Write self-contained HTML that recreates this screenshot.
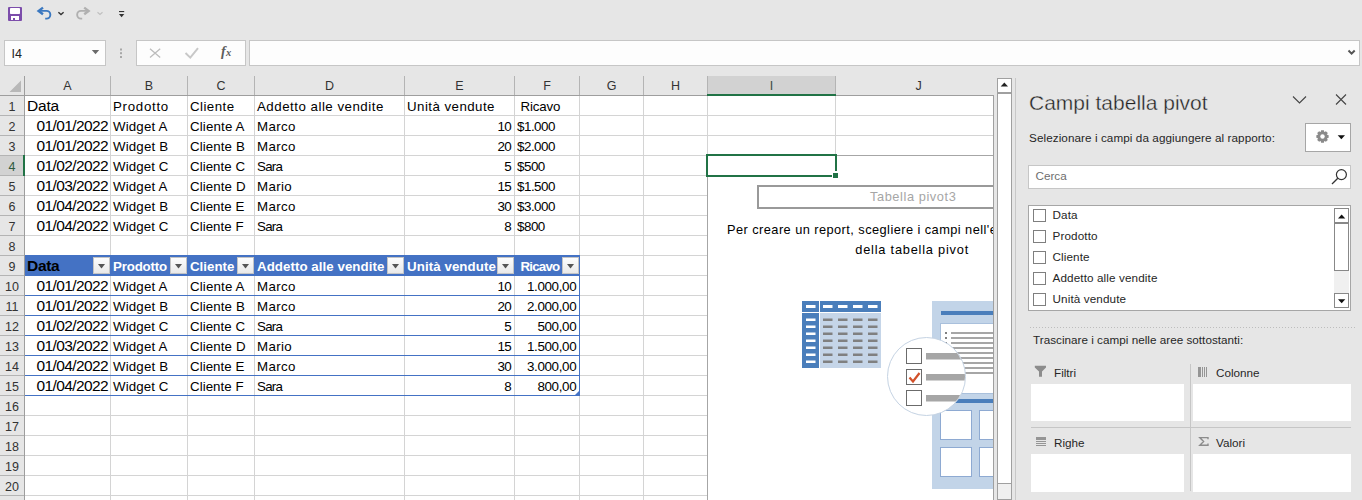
<!DOCTYPE html><html><head><meta charset="utf-8"><style>
html,body{margin:0;padding:0;}
body{width:1362px;height:500px;position:relative;overflow:hidden;background:#e6e6e6;font-family:"Liberation Sans",sans-serif;}
.t{position:absolute;white-space:nowrap;line-height:1;}
.r{position:absolute;}
svg{position:absolute;overflow:visible;}
#sheet{position:absolute;left:0;top:0;width:1362px;height:500px;clip-path:inset(0 368px 0 0);}
</style></head><body>
<svg style="left:0;top:0" width="140" height="30">
<rect x="8" y="7" width="14" height="14" rx="1" fill="#7c4dab"/>
<rect x="10" y="8" width="10" height="6" rx="0.8" fill="#fff"/>
<rect x="11" y="16" width="8" height="4" fill="#fff"/>
<rect x="13" y="18" width="2" height="2" fill="#7c4dab"/>
<path d="M43 7.6 L38.6 10.9 L43 14.2" fill="none" stroke="#3b78c0" stroke-width="2.4" stroke-linejoin="miter"/>
<path d="M39.5 10.9 H46.5 A3.85 3.85 0 0 1 46.5 18.6 H45.2" fill="none" stroke="#3b78c0" stroke-width="1.9"/>
<path d="M58.4 12.3 L61 14.5 L63.6 12.3" fill="none" stroke="#333" stroke-width="1.4"/>
<path d="M84.2 7.6 L88.6 10.9 L84.2 14.2" fill="none" stroke="#b0b0b0" stroke-width="2.4" stroke-linejoin="miter"/>
<path d="M87.7 10.9 H81 A3.85 3.85 0 0 0 81 18.6 H82.2" fill="none" stroke="#b0b0b0" stroke-width="1.9"/>
<path d="M97.5 12.3 L100 14.4 L102.5 12.3" fill="none" stroke="#c0c0c0" stroke-width="1.2"/>
<rect x="119" y="11" width="5.2" height="1.1" fill="#333"/>
<path d="M118.9 14.1 H124.3 L121.6 17.3 Z" fill="#333"/>
</svg>
<div class="r" style="left:4px;top:40px;width:102px;height:26px;background:#fdfdfd;border:1px solid #c6c6c6;box-sizing:border-box;"></div>
<div class="t" style="top:48.42px;font-size:12.5px;color:#222;left:11.5px;">I4</div>
<svg style="left:0;top:0" width="260" height="70"><path d="M91.8 50 H99.2 L95.5 54.2 Z" fill="#6a6a6a"/><rect x="120" y="48.5" width="2" height="2" fill="#a8a8a8"/><rect x="120" y="52.2" width="2" height="2" fill="#a8a8a8"/><rect x="120" y="56" width="2" height="2" fill="#a8a8a8"/></svg>
<div class="r" style="left:136px;top:40px;width:110px;height:26px;background:#fdfdfd;border:1px solid #c6c6c6;box-sizing:border-box;"></div>
<svg style="left:0;top:0" width="260" height="70"><path d="M150 48.8 L160.2 57.6 M160.2 48.8 L150 57.6" stroke="#bdbdbd" stroke-width="1.3" fill="none"/><path d="M185.5 53 L190.3 57.6 L198 48.2" stroke="#c8c8c8" stroke-width="2" fill="none"/></svg>
<div class="t" style="top:44.95px;font-size:14px;color:#5c5c5c;font-weight:bold;font-family:'Liberation Serif',serif;left:221px;"><i>f</i><span style="font-size:10.5px;margin-left:0.3px"><i>x</i></span></div>
<div class="r" style="left:249px;top:40px;width:1111px;height:26px;background:#fdfdfd;border:1px solid #c6c6c6;box-sizing:border-box;"></div>
<svg style="left:0;top:0" width="1362" height="70"><path d="M1348.5 50.5 L1351.6 53.6 L1354.7 50.5" stroke="#555" stroke-width="2" fill="none"/></svg>
<div id="sheet">
<div class="r" style="left:0px;top:76px;width:994px;height:20px;background:#e6e6e6;"></div>
<div class="r" style="left:708px;top:76px;width:127px;height:19px;background:#d2d2d2;"></div>
<div class="r" style="left:110px;top:76px;width:1px;height:19px;background:#b4b4b4;"></div>
<div class="r" style="left:187px;top:76px;width:1px;height:19px;background:#b4b4b4;"></div>
<div class="r" style="left:254px;top:76px;width:1px;height:19px;background:#b4b4b4;"></div>
<div class="r" style="left:404px;top:76px;width:1px;height:19px;background:#b4b4b4;"></div>
<div class="r" style="left:514px;top:76px;width:1px;height:19px;background:#b4b4b4;"></div>
<div class="r" style="left:579px;top:76px;width:1px;height:19px;background:#b4b4b4;"></div>
<div class="r" style="left:643px;top:76px;width:1px;height:19px;background:#b4b4b4;"></div>
<div class="r" style="left:707px;top:76px;width:1px;height:19px;background:#b4b4b4;"></div>
<div class="r" style="left:835px;top:76px;width:1px;height:19px;background:#b4b4b4;"></div>
<div class="r" style="left:0px;top:95px;width:994px;height:1px;background:#9e9e9e;"></div>
<div class="r" style="left:707px;top:94px;width:129px;height:2px;background:#217346;"></div>
<svg style="left:0;top:0" width="30" height="100"><path d="M21 80.5 V92 H9.5 Z" fill="#b8b8b8"/></svg>
<div class="t" style="top:80.22px;font-size:12.5px;color:#333;left:-132.5px;width:400px;text-align:center;">A</div>
<div class="t" style="top:80.22px;font-size:12.5px;color:#333;left:-51.0px;width:400px;text-align:center;">B</div>
<div class="t" style="top:80.22px;font-size:12.5px;color:#333;left:21.0px;width:400px;text-align:center;">C</div>
<div class="t" style="top:80.22px;font-size:12.5px;color:#333;left:129.5px;width:400px;text-align:center;">D</div>
<div class="t" style="top:80.22px;font-size:12.5px;color:#333;left:259.5px;width:400px;text-align:center;">E</div>
<div class="t" style="top:80.22px;font-size:12.5px;color:#333;left:347.0px;width:400px;text-align:center;">F</div>
<div class="t" style="top:80.22px;font-size:12.5px;color:#333;left:411.5px;width:400px;text-align:center;">G</div>
<div class="t" style="top:80.22px;font-size:12.5px;color:#333;left:475.5px;width:400px;text-align:center;">H</div>
<div class="t" style="top:80.22px;font-size:12.5px;color:#3a4a40;left:571.5px;width:400px;text-align:center;">I</div>
<div class="t" style="top:80.22px;font-size:12.5px;color:#333;left:718.5px;width:400px;text-align:center;">J</div>
<div class="r" style="left:0px;top:96px;width:24px;height:404px;background:#e6e6e6;"></div>
<div class="r" style="left:24px;top:76px;width:1px;height:424px;background:#9e9e9e;"></div>
<div class="r" style="left:0px;top:156px;width:24px;height:19px;background:#d2d2d2;"></div>
<div class="r" style="left:0px;top:115px;width:24px;height:1px;background:#b4b4b4;"></div>
<div class="r" style="left:0px;top:135px;width:24px;height:1px;background:#b4b4b4;"></div>
<div class="r" style="left:0px;top:155px;width:24px;height:1px;background:#b4b4b4;"></div>
<div class="r" style="left:0px;top:175px;width:24px;height:1px;background:#b4b4b4;"></div>
<div class="r" style="left:0px;top:195px;width:24px;height:1px;background:#b4b4b4;"></div>
<div class="r" style="left:0px;top:215px;width:24px;height:1px;background:#b4b4b4;"></div>
<div class="r" style="left:0px;top:235px;width:24px;height:1px;background:#b4b4b4;"></div>
<div class="r" style="left:0px;top:255px;width:24px;height:1px;background:#b4b4b4;"></div>
<div class="r" style="left:0px;top:275px;width:24px;height:1px;background:#b4b4b4;"></div>
<div class="r" style="left:0px;top:295px;width:24px;height:1px;background:#b4b4b4;"></div>
<div class="r" style="left:0px;top:315px;width:24px;height:1px;background:#b4b4b4;"></div>
<div class="r" style="left:0px;top:335px;width:24px;height:1px;background:#b4b4b4;"></div>
<div class="r" style="left:0px;top:355px;width:24px;height:1px;background:#b4b4b4;"></div>
<div class="r" style="left:0px;top:375px;width:24px;height:1px;background:#b4b4b4;"></div>
<div class="r" style="left:0px;top:395px;width:24px;height:1px;background:#b4b4b4;"></div>
<div class="r" style="left:0px;top:415px;width:24px;height:1px;background:#b4b4b4;"></div>
<div class="r" style="left:0px;top:435px;width:24px;height:1px;background:#b4b4b4;"></div>
<div class="r" style="left:0px;top:455px;width:24px;height:1px;background:#b4b4b4;"></div>
<div class="r" style="left:0px;top:475px;width:24px;height:1px;background:#b4b4b4;"></div>
<div class="r" style="left:0px;top:495px;width:24px;height:1px;background:#b4b4b4;"></div>
<div class="r" style="left:0px;top:515px;width:24px;height:1px;background:#b4b4b4;"></div>
<div class="t" style="top:100.72px;font-size:12.5px;color:#333;left:-188px;width:400px;text-align:center;">1</div>
<div class="t" style="top:120.72px;font-size:12.5px;color:#333;left:-188px;width:400px;text-align:center;">2</div>
<div class="t" style="top:140.72px;font-size:12.5px;color:#333;left:-188px;width:400px;text-align:center;">3</div>
<div class="t" style="top:160.72px;font-size:12.5px;color:#2f5a40;left:-188px;width:400px;text-align:center;">4</div>
<div class="t" style="top:180.72px;font-size:12.5px;color:#333;left:-188px;width:400px;text-align:center;">5</div>
<div class="t" style="top:200.72px;font-size:12.5px;color:#333;left:-188px;width:400px;text-align:center;">6</div>
<div class="t" style="top:220.72px;font-size:12.5px;color:#333;left:-188px;width:400px;text-align:center;">7</div>
<div class="t" style="top:240.72px;font-size:12.5px;color:#333;left:-188px;width:400px;text-align:center;">8</div>
<div class="t" style="top:260.72px;font-size:12.5px;color:#333;left:-188px;width:400px;text-align:center;">9</div>
<div class="t" style="top:280.72px;font-size:12.5px;color:#333;left:-188px;width:400px;text-align:center;">10</div>
<div class="t" style="top:300.72px;font-size:12.5px;color:#333;left:-188px;width:400px;text-align:center;">11</div>
<div class="t" style="top:320.72px;font-size:12.5px;color:#333;left:-188px;width:400px;text-align:center;">12</div>
<div class="t" style="top:340.72px;font-size:12.5px;color:#333;left:-188px;width:400px;text-align:center;">13</div>
<div class="t" style="top:360.72px;font-size:12.5px;color:#333;left:-188px;width:400px;text-align:center;">14</div>
<div class="t" style="top:380.72px;font-size:12.5px;color:#333;left:-188px;width:400px;text-align:center;">15</div>
<div class="t" style="top:400.72px;font-size:12.5px;color:#333;left:-188px;width:400px;text-align:center;">16</div>
<div class="t" style="top:420.72px;font-size:12.5px;color:#333;left:-188px;width:400px;text-align:center;">17</div>
<div class="t" style="top:440.72px;font-size:12.5px;color:#333;left:-188px;width:400px;text-align:center;">18</div>
<div class="t" style="top:460.72px;font-size:12.5px;color:#333;left:-188px;width:400px;text-align:center;">19</div>
<div class="t" style="top:480.72px;font-size:12.5px;color:#333;left:-188px;width:400px;text-align:center;">20</div>
<div class="t" style="top:500.72px;font-size:12.5px;color:#333;left:-188px;width:400px;text-align:center;">21</div>
<div class="r" style="left:23px;top:155px;width:2px;height:21px;background:#217346;"></div>
<div class="r" style="left:25px;top:96px;width:968px;height:404px;background:#fff;"></div>
<div class="r" style="left:25px;top:115px;width:968px;height:1px;background:#d4d4d4;"></div>
<div class="r" style="left:25px;top:135px;width:968px;height:1px;background:#d4d4d4;"></div>
<div class="r" style="left:25px;top:155px;width:968px;height:1px;background:#d4d4d4;"></div>
<div class="r" style="left:25px;top:175px;width:968px;height:1px;background:#d4d4d4;"></div>
<div class="r" style="left:25px;top:195px;width:968px;height:1px;background:#d4d4d4;"></div>
<div class="r" style="left:25px;top:215px;width:968px;height:1px;background:#d4d4d4;"></div>
<div class="r" style="left:25px;top:235px;width:968px;height:1px;background:#d4d4d4;"></div>
<div class="r" style="left:25px;top:255px;width:968px;height:1px;background:#d4d4d4;"></div>
<div class="r" style="left:25px;top:275px;width:968px;height:1px;background:#d4d4d4;"></div>
<div class="r" style="left:25px;top:295px;width:968px;height:1px;background:#d4d4d4;"></div>
<div class="r" style="left:25px;top:315px;width:968px;height:1px;background:#d4d4d4;"></div>
<div class="r" style="left:25px;top:335px;width:968px;height:1px;background:#d4d4d4;"></div>
<div class="r" style="left:25px;top:355px;width:968px;height:1px;background:#d4d4d4;"></div>
<div class="r" style="left:25px;top:375px;width:968px;height:1px;background:#d4d4d4;"></div>
<div class="r" style="left:25px;top:395px;width:968px;height:1px;background:#d4d4d4;"></div>
<div class="r" style="left:25px;top:415px;width:968px;height:1px;background:#d4d4d4;"></div>
<div class="r" style="left:25px;top:435px;width:968px;height:1px;background:#d4d4d4;"></div>
<div class="r" style="left:25px;top:455px;width:968px;height:1px;background:#d4d4d4;"></div>
<div class="r" style="left:25px;top:475px;width:968px;height:1px;background:#d4d4d4;"></div>
<div class="r" style="left:25px;top:495px;width:968px;height:1px;background:#d4d4d4;"></div>
<div class="r" style="left:25px;top:515px;width:968px;height:1px;background:#d4d4d4;"></div>
<div class="r" style="left:110px;top:96px;width:1px;height:404px;background:#d4d4d4;"></div>
<div class="r" style="left:187px;top:96px;width:1px;height:404px;background:#d4d4d4;"></div>
<div class="r" style="left:254px;top:96px;width:1px;height:404px;background:#d4d4d4;"></div>
<div class="r" style="left:404px;top:96px;width:1px;height:404px;background:#d4d4d4;"></div>
<div class="r" style="left:514px;top:96px;width:1px;height:404px;background:#d4d4d4;"></div>
<div class="r" style="left:579px;top:96px;width:1px;height:404px;background:#d4d4d4;"></div>
<div class="r" style="left:643px;top:96px;width:1px;height:404px;background:#d4d4d4;"></div>
<div class="r" style="left:707px;top:96px;width:1px;height:404px;background:#d4d4d4;"></div>
<div class="r" style="left:835px;top:96px;width:1px;height:404px;background:#d4d4d4;"></div>
<div class="r" style="left:708px;top:156px;width:285px;height:344px;background:#fff;"></div>
<div class="r" style="left:707px;top:155px;width:1px;height:345px;background:#a6a6a6;"></div>
<div class="r" style="left:707px;top:155px;width:286px;height:1px;background:#a6a6a6;"></div>
<div class="r" style="left:25px;top:255px;width:555px;height:21px;background:#4472c4;"></div>
<div class="r" style="left:25px;top:295px;width:555px;height:1px;background:#4472c4;"></div>
<div class="r" style="left:25px;top:315px;width:555px;height:1px;background:#4472c4;"></div>
<div class="r" style="left:25px;top:335px;width:555px;height:1px;background:#4472c4;"></div>
<div class="r" style="left:25px;top:355px;width:555px;height:1px;background:#4472c4;"></div>
<div class="r" style="left:25px;top:375px;width:555px;height:1px;background:#4472c4;"></div>
<div class="r" style="left:25px;top:395px;width:555px;height:1px;background:#4472c4;"></div>
<div class="r" style="left:579px;top:255px;width:1px;height:141px;background:#4472c4;"></div>
<svg style="left:0;top:0" width="600" height="400"><path d="M579.5 390.5 V395.5 H574.5 Z" fill="#4472c4"/></svg>
<div class="r" style="left:93px;top:257px;width:17px;height:17px;background:linear-gradient(#fdfdfd,#e9e9e9);border:1px solid #c4c4c4;box-sizing:border-box;"></div>
<svg style="left:0;top:0" width="600" height="300"><path d="M98 264 H105 L101.5 268.5 Z" fill="#555"/></svg>
<div class="r" style="left:170px;top:257px;width:17px;height:17px;background:linear-gradient(#fdfdfd,#e9e9e9);border:1px solid #c4c4c4;box-sizing:border-box;"></div>
<svg style="left:0;top:0" width="600" height="300"><path d="M175 264 H182 L178.5 268.5 Z" fill="#555"/></svg>
<div class="r" style="left:237px;top:257px;width:17px;height:17px;background:linear-gradient(#fdfdfd,#e9e9e9);border:1px solid #c4c4c4;box-sizing:border-box;"></div>
<svg style="left:0;top:0" width="600" height="300"><path d="M242 264 H249 L245.5 268.5 Z" fill="#555"/></svg>
<div class="r" style="left:387px;top:257px;width:17px;height:17px;background:linear-gradient(#fdfdfd,#e9e9e9);border:1px solid #c4c4c4;box-sizing:border-box;"></div>
<svg style="left:0;top:0" width="600" height="300"><path d="M392 264 H399 L395.5 268.5 Z" fill="#555"/></svg>
<div class="r" style="left:497px;top:257px;width:17px;height:17px;background:linear-gradient(#fdfdfd,#e9e9e9);border:1px solid #c4c4c4;box-sizing:border-box;"></div>
<svg style="left:0;top:0" width="600" height="300"><path d="M502 264 H509 L505.5 268.5 Z" fill="#555"/></svg>
<div class="r" style="left:562px;top:257px;width:17px;height:17px;background:linear-gradient(#fdfdfd,#e9e9e9);border:1px solid #c4c4c4;box-sizing:border-box;"></div>
<svg style="left:0;top:0" width="600" height="300"><path d="M567 264 H574 L570.5 268.5 Z" fill="#555"/></svg>
<div class="t" style="top:97.88px;font-size:15.5px;color:#000;letter-spacing:-0.2px;left:27px;">Data</div>
<div class="t" style="top:99.74px;font-size:13.3px;color:#000;letter-spacing:0.7px;left:113px;">Prodotto</div>
<div class="t" style="top:99.74px;font-size:13.3px;color:#000;letter-spacing:0.45px;left:190px;">Cliente</div>
<div class="t" style="top:99.74px;font-size:13.3px;color:#000;letter-spacing:0.5px;left:257px;">Addetto alle vendite</div>
<div class="t" style="top:99.74px;font-size:13.3px;color:#000;letter-spacing:0.45px;left:407px;">Unit&agrave; vendute</div>
<div class="t" style="top:99.74px;font-size:13.3px;color:#000;letter-spacing:-0.17px;left:520.5px;">Ricavo</div>
<div class="t" style="top:117.88px;font-size:15.5px;color:#000;letter-spacing:-0.62px;right:1254.02px;">01/01/2022</div>
<div class="t" style="top:119.74px;font-size:13.3px;color:#000;letter-spacing:0.15px;left:113px;">Widget A</div>
<div class="t" style="top:119.74px;font-size:13.3px;color:#000;letter-spacing:0.15px;left:190px;">Cliente A</div>
<div class="t" style="top:119.74px;font-size:13.3px;color:#000;letter-spacing:0.36px;left:257px;">Marco</div>
<div class="t" style="top:119.66px;font-size:13.4px;color:#000;letter-spacing:-0.5px;right:850.70px;">10</div>
<div class="t" style="top:119.66px;font-size:13.4px;color:#000;letter-spacing:-0.5px;left:517px;">$1.000</div>
<div class="t" style="top:137.88px;font-size:15.5px;color:#000;letter-spacing:-0.62px;right:1254.02px;">01/01/2022</div>
<div class="t" style="top:139.74px;font-size:13.3px;color:#000;letter-spacing:0.15px;left:113px;">Widget B</div>
<div class="t" style="top:139.74px;font-size:13.3px;color:#000;letter-spacing:0.1px;left:190px;">Cliente B</div>
<div class="t" style="top:139.74px;font-size:13.3px;color:#000;letter-spacing:0.36px;left:257px;">Marco</div>
<div class="t" style="top:139.66px;font-size:13.4px;color:#000;letter-spacing:-0.5px;right:850.70px;">20</div>
<div class="t" style="top:139.66px;font-size:13.4px;color:#000;letter-spacing:-0.5px;left:517px;">$2.000</div>
<div class="t" style="top:157.88px;font-size:15.5px;color:#000;letter-spacing:-0.62px;right:1254.02px;">01/02/2022</div>
<div class="t" style="top:159.74px;font-size:13.3px;color:#000;letter-spacing:0.1px;left:113px;">Widget C</div>
<div class="t" style="top:159.74px;font-size:13.3px;color:#000;letter-spacing:0.05px;left:190px;">Cliente C</div>
<div class="t" style="top:159.74px;font-size:13.3px;color:#000;letter-spacing:-0.7px;left:257px;">Sara</div>
<div class="t" style="top:159.66px;font-size:13.4px;color:#000;letter-spacing:-0.5px;right:850.70px;">5</div>
<div class="t" style="top:159.66px;font-size:13.4px;color:#000;letter-spacing:-0.5px;left:517px;">$500</div>
<div class="t" style="top:177.88px;font-size:15.5px;color:#000;letter-spacing:-0.62px;right:1254.02px;">01/03/2022</div>
<div class="t" style="top:179.74px;font-size:13.3px;color:#000;letter-spacing:0.15px;left:113px;">Widget A</div>
<div class="t" style="top:179.74px;font-size:13.3px;color:#000;letter-spacing:0.1px;left:190px;">Cliente D</div>
<div class="t" style="top:179.74px;font-size:13.3px;color:#000;letter-spacing:0.36px;left:257px;">Mario</div>
<div class="t" style="top:179.66px;font-size:13.4px;color:#000;letter-spacing:-0.5px;right:850.70px;">15</div>
<div class="t" style="top:179.66px;font-size:13.4px;color:#000;letter-spacing:-0.5px;left:517px;">$1.500</div>
<div class="t" style="top:197.88px;font-size:15.5px;color:#000;letter-spacing:-0.62px;right:1254.02px;">01/04/2022</div>
<div class="t" style="top:199.74px;font-size:13.3px;color:#000;letter-spacing:0.15px;left:113px;">Widget B</div>
<div class="t" style="top:199.74px;font-size:13.3px;color:#000;letter-spacing:0.05px;left:190px;">Cliente E</div>
<div class="t" style="top:199.74px;font-size:13.3px;color:#000;letter-spacing:0.36px;left:257px;">Marco</div>
<div class="t" style="top:199.66px;font-size:13.4px;color:#000;letter-spacing:-0.5px;right:850.70px;">30</div>
<div class="t" style="top:199.66px;font-size:13.4px;color:#000;letter-spacing:-0.5px;left:517px;">$3.000</div>
<div class="t" style="top:217.88px;font-size:15.5px;color:#000;letter-spacing:-0.62px;right:1254.02px;">01/04/2022</div>
<div class="t" style="top:219.74px;font-size:13.3px;color:#000;letter-spacing:0.1px;left:113px;">Widget C</div>
<div class="t" style="top:219.74px;font-size:13.3px;color:#000;letter-spacing:0.05px;left:190px;">Cliente F</div>
<div class="t" style="top:219.74px;font-size:13.3px;color:#000;letter-spacing:-0.7px;left:257px;">Sara</div>
<div class="t" style="top:219.66px;font-size:13.4px;color:#000;letter-spacing:-0.5px;right:850.70px;">8</div>
<div class="t" style="top:219.66px;font-size:13.4px;color:#000;letter-spacing:-0.5px;left:517px;">$800</div>
<div class="t" style="top:257.88px;font-size:15.5px;color:#000;font-weight:bold;letter-spacing:-0.3px;left:27px;">Data</div>
<div class="t" style="top:259.74px;font-size:13.3px;color:#fff;font-weight:bold;letter-spacing:-0.18px;left:113px;">Prodotto</div>
<div class="t" style="top:259.74px;font-size:13.3px;color:#fff;font-weight:bold;left:190px;">Cliente</div>
<div class="t" style="top:259.74px;font-size:13.3px;color:#fff;font-weight:bold;letter-spacing:0.05px;left:257px;">Addetto alle vendite</div>
<div class="t" style="top:259.74px;font-size:13.3px;color:#fff;font-weight:bold;letter-spacing:0.08px;left:407px;">Unit&agrave; vendute</div>
<div class="t" style="top:259.74px;font-size:13.3px;color:#fff;font-weight:bold;letter-spacing:-0.8px;left:520.5px;">Ricavo</div>
<div class="t" style="top:277.88px;font-size:15.5px;color:#000;letter-spacing:-0.62px;right:1254.02px;">01/01/2022</div>
<div class="t" style="top:279.74px;font-size:13.3px;color:#000;letter-spacing:0.15px;left:113px;">Widget A</div>
<div class="t" style="top:279.74px;font-size:13.3px;color:#000;letter-spacing:0.15px;left:190px;">Cliente A</div>
<div class="t" style="top:279.74px;font-size:13.3px;color:#000;letter-spacing:0.36px;left:257px;">Marco</div>
<div class="t" style="top:279.66px;font-size:13.4px;color:#000;letter-spacing:-0.5px;right:850.70px;">10</div>
<div class="t" style="top:279.66px;font-size:13.4px;color:#000;letter-spacing:-0.35px;right:785.75px;">1.000,00</div>
<div class="t" style="top:297.88px;font-size:15.5px;color:#000;letter-spacing:-0.62px;right:1254.02px;">01/01/2022</div>
<div class="t" style="top:299.74px;font-size:13.3px;color:#000;letter-spacing:0.15px;left:113px;">Widget B</div>
<div class="t" style="top:299.74px;font-size:13.3px;color:#000;letter-spacing:0.1px;left:190px;">Cliente B</div>
<div class="t" style="top:299.74px;font-size:13.3px;color:#000;letter-spacing:0.36px;left:257px;">Marco</div>
<div class="t" style="top:299.66px;font-size:13.4px;color:#000;letter-spacing:-0.5px;right:850.70px;">20</div>
<div class="t" style="top:299.66px;font-size:13.4px;color:#000;letter-spacing:-0.35px;right:785.75px;">2.000,00</div>
<div class="t" style="top:317.88px;font-size:15.5px;color:#000;letter-spacing:-0.62px;right:1254.02px;">01/02/2022</div>
<div class="t" style="top:319.74px;font-size:13.3px;color:#000;letter-spacing:0.1px;left:113px;">Widget C</div>
<div class="t" style="top:319.74px;font-size:13.3px;color:#000;letter-spacing:0.05px;left:190px;">Cliente C</div>
<div class="t" style="top:319.74px;font-size:13.3px;color:#000;letter-spacing:-0.7px;left:257px;">Sara</div>
<div class="t" style="top:319.66px;font-size:13.4px;color:#000;letter-spacing:-0.5px;right:850.70px;">5</div>
<div class="t" style="top:319.66px;font-size:13.4px;color:#000;letter-spacing:-0.35px;right:785.75px;">500,00</div>
<div class="t" style="top:337.88px;font-size:15.5px;color:#000;letter-spacing:-0.62px;right:1254.02px;">01/03/2022</div>
<div class="t" style="top:339.74px;font-size:13.3px;color:#000;letter-spacing:0.15px;left:113px;">Widget A</div>
<div class="t" style="top:339.74px;font-size:13.3px;color:#000;letter-spacing:0.1px;left:190px;">Cliente D</div>
<div class="t" style="top:339.74px;font-size:13.3px;color:#000;letter-spacing:0.36px;left:257px;">Mario</div>
<div class="t" style="top:339.66px;font-size:13.4px;color:#000;letter-spacing:-0.5px;right:850.70px;">15</div>
<div class="t" style="top:339.66px;font-size:13.4px;color:#000;letter-spacing:-0.35px;right:785.75px;">1.500,00</div>
<div class="t" style="top:357.88px;font-size:15.5px;color:#000;letter-spacing:-0.62px;right:1254.02px;">01/04/2022</div>
<div class="t" style="top:359.74px;font-size:13.3px;color:#000;letter-spacing:0.15px;left:113px;">Widget B</div>
<div class="t" style="top:359.74px;font-size:13.3px;color:#000;letter-spacing:0.05px;left:190px;">Cliente E</div>
<div class="t" style="top:359.74px;font-size:13.3px;color:#000;letter-spacing:0.36px;left:257px;">Marco</div>
<div class="t" style="top:359.66px;font-size:13.4px;color:#000;letter-spacing:-0.5px;right:850.70px;">30</div>
<div class="t" style="top:359.66px;font-size:13.4px;color:#000;letter-spacing:-0.35px;right:785.75px;">3.000,00</div>
<div class="t" style="top:377.88px;font-size:15.5px;color:#000;letter-spacing:-0.62px;right:1254.02px;">01/04/2022</div>
<div class="t" style="top:379.74px;font-size:13.3px;color:#000;letter-spacing:0.1px;left:113px;">Widget C</div>
<div class="t" style="top:379.74px;font-size:13.3px;color:#000;letter-spacing:0.05px;left:190px;">Cliente F</div>
<div class="t" style="top:379.74px;font-size:13.3px;color:#000;letter-spacing:-0.7px;left:257px;">Sara</div>
<div class="t" style="top:379.66px;font-size:13.4px;color:#000;letter-spacing:-0.5px;right:850.70px;">8</div>
<div class="t" style="top:379.66px;font-size:13.4px;color:#000;letter-spacing:-0.35px;right:785.75px;">800,00</div>
<div class="r" style="left:757px;top:185px;width:300px;height:24px;border:2px solid #999;box-sizing:border-box;"></div>
<div class="t" style="top:191.16px;font-size:12.8px;color:#a6a6a6;letter-spacing:0.58px;left:870px;">Tabella pivot3</div>
<div class="t" style="top:224.16px;font-size:12.8px;color:#000;letter-spacing:0.44px;left:727px;">Per creare un report, scegliere i campi nell&#39;elenco campi</div>
<div class="t" style="top:244.16px;font-size:12.8px;color:#000;letter-spacing:0.78px;left:855.3px;">della tabella pivot</div>
<svg style="left:0;top:0" width="1362" height="500"><rect x="802" y="301" width="79" height="11" fill="#4a7ebb"/><rect x="802" y="313" width="17" height="55" fill="#4a7ebb"/><rect x="819" y="301" width="1" height="11" fill="#fff"/><rect x="820" y="313" width="61" height="55" fill="#c5d5e8"/><rect x="806" y="305" width="9.5" height="3" fill="#fff"/><rect x="823" y="305" width="9.5" height="3" fill="#fff"/><rect x="838" y="305" width="9.5" height="3" fill="#fff"/><rect x="853" y="305" width="9.5" height="3" fill="#fff"/><rect x="868" y="305" width="9.5" height="3" fill="#fff"/><rect x="806" y="318.5" width="9.5" height="2.5" fill="#fff"/><rect x="823" y="318.5" width="9.5" height="2.5" fill="#808080"/><rect x="838" y="318.5" width="9.5" height="2.5" fill="#808080"/><rect x="853" y="318.5" width="9.5" height="2.5" fill="#808080"/><rect x="868" y="318.5" width="9.5" height="2.5" fill="#808080"/><rect x="806" y="325.5" width="9.5" height="2.5" fill="#fff"/><rect x="823" y="325.5" width="9.5" height="2.5" fill="#808080"/><rect x="838" y="325.5" width="9.5" height="2.5" fill="#808080"/><rect x="853" y="325.5" width="9.5" height="2.5" fill="#808080"/><rect x="868" y="325.5" width="9.5" height="2.5" fill="#808080"/><rect x="806" y="332.5" width="9.5" height="2.5" fill="#fff"/><rect x="823" y="332.5" width="9.5" height="2.5" fill="#808080"/><rect x="838" y="332.5" width="9.5" height="2.5" fill="#808080"/><rect x="853" y="332.5" width="9.5" height="2.5" fill="#808080"/><rect x="868" y="332.5" width="9.5" height="2.5" fill="#808080"/><rect x="806" y="339.5" width="9.5" height="2.5" fill="#fff"/><rect x="823" y="339.5" width="9.5" height="2.5" fill="#808080"/><rect x="838" y="339.5" width="9.5" height="2.5" fill="#808080"/><rect x="853" y="339.5" width="9.5" height="2.5" fill="#808080"/><rect x="868" y="339.5" width="9.5" height="2.5" fill="#808080"/><rect x="806" y="346.5" width="9.5" height="2.5" fill="#fff"/><rect x="823" y="346.5" width="9.5" height="2.5" fill="#808080"/><rect x="838" y="346.5" width="9.5" height="2.5" fill="#808080"/><rect x="853" y="346.5" width="9.5" height="2.5" fill="#808080"/><rect x="868" y="346.5" width="9.5" height="2.5" fill="#808080"/><rect x="806" y="353.5" width="9.5" height="2.5" fill="#fff"/><rect x="823" y="353.5" width="9.5" height="2.5" fill="#808080"/><rect x="838" y="353.5" width="9.5" height="2.5" fill="#808080"/><rect x="853" y="353.5" width="9.5" height="2.5" fill="#808080"/><rect x="868" y="353.5" width="9.5" height="2.5" fill="#808080"/><rect x="806" y="360.5" width="9.5" height="2.5" fill="#fff"/><rect x="823" y="360.5" width="9.5" height="2.5" fill="#808080"/><rect x="838" y="360.5" width="9.5" height="2.5" fill="#808080"/><rect x="853" y="360.5" width="9.5" height="2.5" fill="#808080"/><rect x="868" y="360.5" width="9.5" height="2.5" fill="#808080"/><rect x="932" y="301" width="80" height="188" fill="#c2d4e8"/><rect x="941" y="311" width="52" height="4" fill="#4a7ebb"/><rect x="940.5" y="323.5" width="60" height="70" fill="#fff" stroke="#a9c0dc" stroke-width="1"/><rect x="951" y="332" width="50" height="2" fill="#a6a6a6"/><rect x="951" y="337" width="50" height="2" fill="#a6a6a6"/><rect x="951" y="342" width="50" height="2" fill="#a6a6a6"/><rect x="951" y="347" width="50" height="2" fill="#a6a6a6"/><rect x="951" y="352" width="50" height="2" fill="#a6a6a6"/><rect x="951" y="357" width="50" height="2" fill="#a6a6a6"/><rect x="951" y="362" width="50" height="2" fill="#a6a6a6"/><rect x="951" y="367" width="50" height="2" fill="#a6a6a6"/><rect x="951" y="372" width="50" height="2" fill="#a6a6a6"/><rect x="945" y="332" width="2" height="2" fill="#808080"/><rect x="945" y="337" width="2" height="2" fill="#808080"/><rect x="945" y="342" width="2" height="2" fill="#808080"/><rect x="941" y="399" width="52" height="4" fill="#4a7ebb"/><rect x="940.5" y="410.5" width="31" height="29" fill="#fff" stroke="#8eaad2" stroke-width="1"/><rect x="979.5" y="410.5" width="31" height="29" fill="#fff" stroke="#8eaad2" stroke-width="1"/><rect x="940.5" y="447.5" width="31" height="29" fill="#fff" stroke="#8eaad2" stroke-width="1"/><rect x="979.5" y="447.5" width="31" height="29" fill="#fff" stroke="#8eaad2" stroke-width="1"/><circle cx="926.5" cy="376.5" r="39" fill="#fff" stroke="#c5d3e3" stroke-width="1"/><rect x="906.5" y="348.5" width="15" height="15" fill="#fff" stroke="#6b6b6b" stroke-width="1"/><rect x="906.5" y="369.5" width="15" height="15" fill="#fff" stroke="#6b6b6b" stroke-width="1"/><rect x="906.5" y="390.5" width="15" height="15" fill="#fff" stroke="#6b6b6b" stroke-width="1"/><clipPath id="cc"><circle cx="926.5" cy="376.5" r="38.5"/></clipPath><g clip-path="url(#cc)"><rect x="926" y="353" width="50" height="6.5" fill="#a6a6a6"/><rect x="926" y="374" width="50" height="6.5" fill="#a6a6a6"/><rect x="926" y="395" width="50" height="6.5" fill="#a6a6a6"/></g><path d="M909.5 377.5 L913 381.5 L919.5 373" stroke="#d2512a" stroke-width="2.2" fill="none"/></svg>
<div class="r" style="left:706px;top:154px;width:131px;height:23px;border:2px solid #217346;box-sizing:border-box;"></div>
<div class="r" style="left:832px;top:171px;width:8px;height:8px;background:#fff;"></div>
<div class="r" style="left:833px;top:173px;width:5px;height:5px;background:#217346;"></div>
<div class="r" style="left:993px;top:95px;width:1px;height:405px;background:#a0a0a0;"></div>
</div>
<div class="r" style="left:994px;top:76px;width:3px;height:424px;background:#e6e6e6;"></div>
<div class="r" style="left:997px;top:78px;width:15px;height:422px;background:#f0f0f0;border:1px solid #a0a0a0;box-sizing:border-box;"></div>
<div class="r" style="left:997px;top:78px;width:15px;height:16px;background:#fff;border:1px solid #a0a0a0;box-sizing:border-box;"></div>
<div class="r" style="left:997px;top:92px;width:15px;height:392px;background:#fff;border:1px solid #a0a0a0;box-sizing:border-box;"></div>
<div class="r" style="left:997px;top:92px;width:15px;height:2px;background:#a0a0a0;"></div>
<svg style="left:0;top:0" width="1362" height="100"><path d="M1000.7 86.5 H1008 L1004.35 82.6 Z" fill="#222"/></svg>
<div class="r" style="left:1015px;top:78px;width:1px;height:422px;background:#c8c8c8;"></div>
<div class="t" style="top:92.22px;font-size:21px;color:#222;left:1029px;-webkit-text-stroke:0.35px #e6e6e6;">Campi tabella pivot</div>
<svg style="left:0;top:0" width="1362" height="500"><path d="M1293 96.5 L1299.5 103 L1306 96.5" stroke="#444" stroke-width="1.1" fill="none"/><path d="M1336 94.5 L1346 104.5 M1346 94.5 L1336 104.5" stroke="#444" stroke-width="1.1" fill="none"/></svg>
<div class="t" style="top:132.10px;font-size:11.7px;color:#262626;letter-spacing:0.08px;left:1029px;">Selezionare i campi da aggiungere al rapporto:</div>
<div class="r" style="left:1305px;top:123px;width:46px;height:29px;background:#fff;border:1px solid #a6a6a6;box-sizing:border-box;"></div>
<svg style="left:0;top:0" width="1362" height="500"><polygon points="1328.65,135.13 1328.65,137.87 1326.70,138.38 1326.80,138.14 1327.82,139.88 1325.88,141.82 1324.14,140.80 1324.38,140.70 1323.87,142.65 1321.13,142.65 1320.62,140.70 1320.86,140.80 1319.12,141.82 1317.18,139.88 1318.20,138.14 1318.30,138.38 1316.35,137.87 1316.35,135.13 1318.30,134.62 1318.20,134.86 1317.18,133.12 1319.12,131.18 1320.86,132.20 1320.62,132.30 1321.13,130.35 1323.87,130.35 1324.38,132.30 1324.14,132.20 1325.88,131.18 1327.82,133.12 1326.80,134.86 1326.70,134.62" fill="#8a8a8a"/><circle cx="1322.5" cy="136.5" r="2.2" fill="#fff"/><path d="M1337.7 135.2 H1345 L1341.35 139.2 Z" fill="#111"/></svg>
<div class="r" style="left:1028px;top:165px;width:323px;height:24px;background:#fff;border:1px solid #c6c6c6;box-sizing:border-box;"></div>
<div class="t" style="top:170.10px;font-size:11.7px;color:#6e6e6e;left:1035.5px;">Cerca</div>
<svg style="left:0;top:0" width="1362" height="500"><circle cx="1341.4" cy="174.6" r="5" stroke="#333" stroke-width="1.2" fill="none"/><path d="M1337.8 178.2 L1332 184" stroke="#333" stroke-width="1.3" fill="none"/></svg>
<div class="r" style="left:1028px;top:205px;width:323px;height:106px;background:#fff;border:1px solid #a6a6a6;box-sizing:border-box;"></div>
<div class="r" style="left:1033px;top:209px;width:13px;height:13px;background:#fff;border:1px solid #7f7f7f;box-sizing:border-box;"></div>
<div class="t" style="top:208.80px;font-size:11.7px;color:#262626;letter-spacing:0.12px;left:1052.5px;">Data</div>
<div class="r" style="left:1033px;top:230px;width:13px;height:13px;background:#fff;border:1px solid #7f7f7f;box-sizing:border-box;"></div>
<div class="t" style="top:229.80px;font-size:11.7px;color:#262626;letter-spacing:0.12px;left:1052.5px;">Prodotto</div>
<div class="r" style="left:1033px;top:251px;width:13px;height:13px;background:#fff;border:1px solid #7f7f7f;box-sizing:border-box;"></div>
<div class="t" style="top:250.80px;font-size:11.7px;color:#262626;letter-spacing:0.12px;left:1052.5px;">Cliente</div>
<div class="r" style="left:1033px;top:272px;width:13px;height:13px;background:#fff;border:1px solid #7f7f7f;box-sizing:border-box;"></div>
<div class="t" style="top:271.80px;font-size:11.7px;color:#262626;letter-spacing:0.12px;left:1052.5px;">Addetto alle vendite</div>
<div class="r" style="left:1033px;top:293px;width:13px;height:13px;background:#fff;border:1px solid #7f7f7f;box-sizing:border-box;"></div>
<div class="t" style="top:292.80px;font-size:11.7px;color:#262626;letter-spacing:0.12px;left:1052.5px;">Unit&agrave; vendute</div>
<div class="r" style="left:1334px;top:208px;width:15px;height:100px;background:#f0f0f0;"></div>
<div class="r" style="left:1334px;top:208px;width:15px;height:15px;background:#fff;border:1px solid #888;box-sizing:border-box;"></div>
<div class="r" style="left:1334px;top:222px;width:15px;height:49px;background:#fff;border:1px solid #888;box-sizing:border-box;"></div>
<div class="r" style="left:1334px;top:293px;width:15px;height:15px;background:#fff;border:1px solid #888;box-sizing:border-box;"></div>
<div class="r" style="left:1334px;top:222px;width:15px;height:2px;background:#888;"></div>
<svg style="left:0;top:0" width="1362" height="500"><path d="M1338 218.5 H1345.3 L1341.65 214.5 Z" fill="#111"/><path d="M1338 299.2 H1345.3 L1341.65 303.2 Z" fill="#111"/></svg>
<div class="r" style="left:1030px;top:327px;width:325px;height:1px;background:repeating-linear-gradient(90deg,#bdbdbd 0 1px,transparent 1px 3px)"></div>
<div class="t" style="top:334.10px;font-size:11.7px;color:#262626;letter-spacing:0.02px;left:1033px;">Trascinare i campi nelle aree sottostanti:</div>
<div class="r" style="left:1190px;top:364px;width:1px;height:127px;background:#c6c6c6;"></div>
<div class="r" style="left:1031px;top:427px;width:320px;height:1px;background:#c6c6c6;"></div>
<div class="r" style="left:1031px;top:384px;width:153px;height:37px;background:#fff;"></div>
<div class="r" style="left:1193px;top:384px;width:158px;height:37px;background:#fff;"></div>
<div class="r" style="left:1031px;top:454px;width:153px;height:38px;background:#fff;"></div>
<div class="r" style="left:1193px;top:454px;width:158px;height:38px;background:#fff;"></div>
<div class="t" style="top:367.10px;font-size:11.7px;color:#262626;left:1054px;">Filtri</div>
<div class="t" style="top:367.10px;font-size:11.7px;color:#262626;left:1216px;">Colonne</div>
<div class="t" style="top:437.10px;font-size:11.7px;color:#262626;left:1054px;">Righe</div>
<div class="t" style="top:437.10px;font-size:11.7px;color:#262626;left:1216px;">Valori</div>
<svg style="left:0;top:0" width="1362" height="500"><path d="M1034.8 365.8 H1046 V367.4 L1042 371.6 V376.8 H1039 V371.6 L1034.8 367.4 Z" fill="#8c8c8c"/><rect x="1198" y="367" width="3" height="10" fill="#959595"/><rect x="1202" y="367" width="1" height="10" fill="#959595"/><rect x="1204" y="367" width="1" height="10" fill="#959595"/><rect x="1206" y="367" width="1" height="10" fill="#959595"/><rect x="1036" y="437" width="10" height="3" fill="#959595"/><rect x="1036" y="441" width="10" height="1" fill="#959595"/><rect x="1036" y="443" width="10" height="1" fill="#959595"/><rect x="1036" y="445" width="10" height="1" fill="#959595"/><path d="M1208 439.3 V437.6 H1199.8 L1203.6 441.5 L1199.8 445.3 H1208 V443.6" stroke="#8c8c8c" stroke-width="1.4" fill="none"/></svg>
</body></html>
